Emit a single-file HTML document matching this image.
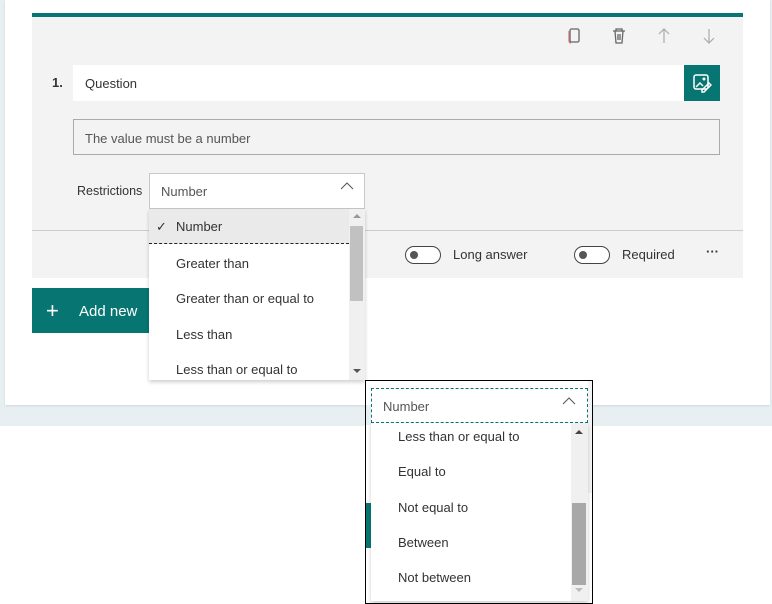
<!DOCTYPE html>
<html><head><style>
*{margin:0;padding:0;box-sizing:border-box}
body{width:772px;height:604px;position:relative;overflow:hidden;background:#fff;font-family:"Liberation Sans",sans-serif;color:#333}
.a{position:absolute}
.t{font-size:13px;color:#333;white-space:nowrap}
</style></head><body>
<div class="a" style="left:0;top:0;width:772px;height:426px;background:#e7eff2"></div>
<div class="a" style="left:5px;top:0;width:765px;height:405px;background:#fff;box-shadow:0 1px 2px rgba(0,0,0,.1)"></div>
<div class="a" style="left:32px;top:13px;width:711px;height:265px;background:#f3f3f3"></div>
<div class="a" style="left:32px;top:13px;width:711px;height:4px;background:#077672"></div>
<div class="a" style="left:32px;top:230px;width:711px;height:1px;background:#ccc"></div>
<!-- toolbar icons -->
<svg class="a" style="left:560px;top:25px" width="170" height="22" viewBox="0 0 170 22">
<rect x="10" y="4" width="9" height="13" rx="1.5" fill="none" stroke="#666" stroke-width="1.3"/>
<path d="M9 6v10a2 2 0 0 0 2 2" stroke="#c77" fill="none" stroke-width="1.2"/>
<path d="M53 6h12M56 6V4h6v2M55 6l1 12h6l1-12M58 9v6M60 9v6" stroke="#666" fill="none" stroke-width="1.3"/>
<path d="M104 18V4M99 9l5-5 5 5" stroke="#aaa" fill="none" stroke-width="1.2"/>
<path d="M149 4v14M144 13l5 5 5-5" stroke="#aaa" fill="none" stroke-width="1.2"/>
</svg>
<div class="a" style="left:52px;top:75px;font-size:13px;font-weight:bold">1.</div>
<div class="a" style="left:73px;top:65px;width:611px;height:36px;background:#fff"></div>
<div class="a t" style="left:85px;top:76px">Question</div>
<div class="a" style="left:684px;top:65px;width:36px;height:36px;background:#077672"></div>
<svg class="a" style="left:692px;top:73px" width="20" height="20" viewBox="0 0 20 20"><rect x="2" y="2" width="14" height="14" rx="2" fill="none" stroke="#fff" stroke-width="1.5"/><circle cx="12" cy="6" r="1.5" fill="#fff"/><path d="M4 14l4-4 3 3M10 17l7-7 2 2-7 7h-2z" stroke="#fff" fill="none" stroke-width="1.5"/></svg>
<div class="a" style="left:73px;top:119px;width:647px;height:36px;border:1px solid #aaa;background:#f3f3f3"></div>
<div class="a t" style="left:85px;top:131px;color:#555">The value must be a number</div>
<div class="a t" style="left:77px;top:184px;font-size:12.5px">Restrictions</div>
<div class="a" style="left:149px;top:173px;width:216px;height:36px;border:1px solid #c8c8c8;background:#fff"></div>
<div class="a t" style="left:161px;top:184px;color:#555">Number</div>
<svg class="a" style="left:340px;top:182px" width="14" height="10"><path d="M1 7l6-6 6 6" stroke="#555" fill="none"/></svg>
<!-- toggles -->
<div class="a" style="left:405px;top:246px;width:36px;height:18px;border:1px solid #444;border-radius:9px;background:#fff"></div>
<div class="a" style="left:410px;top:251px;width:8px;height:8px;border-radius:50%;background:#555"></div>
<div class="a t" style="left:453px;top:247px">Long answer</div>
<div class="a" style="left:574px;top:246px;width:36px;height:18px;border:1px solid #444;border-radius:9px;background:#fff"></div>
<div class="a" style="left:579px;top:251px;width:8px;height:8px;border-radius:50%;background:#555"></div>
<div class="a t" style="left:622px;top:247px">Required</div>
<div class="a t" style="left:706px;top:244px;font-weight:bold">···</div>
<!-- add new -->
<div class="a" style="left:32px;top:288px;width:120px;height:45px;background:#077672"></div>
<div class="a" style="left:46px;top:298px;color:#fff;font-size:22px;font-weight:300">+</div>
<div class="a" style="left:79px;top:303px;color:#fff;font-size:15px">Add new</div>
<!-- dropdown 1 -->
<div class="a" style="left:149px;top:209px;width:216px;height:171px;background:#fff;box-shadow:0 2px 4px rgba(0,0,0,.2);overflow:hidden">
<div class="a" style="left:0;top:0;width:200px;height:35px;background:#eaeaea;border-bottom:1px dashed #222"></div>
<div class="a t" style="left:7px;top:10px">✓</div>
<div class="a t" style="left:27px;top:10px">Number</div>
<div class="a t" style="left:27px;top:47px">Greater than</div>
<div class="a t" style="left:27px;top:82px">Greater than or equal to</div>
<div class="a t" style="left:27px;top:118px">Less than</div>
<div class="a t" style="left:27px;top:153px">Less than or equal to</div>
<div class="a" style="left:200px;top:0;width:16px;height:171px;background:#f0f0f0"></div>
<div class="a" style="left:201px;top:17px;width:13px;height:75px;background:#c1c1c1"></div>
<div class="a" style="left:204px;top:5px;border:4px solid transparent;border-bottom:4px solid #999;border-top:0"></div>
<div class="a" style="left:204px;top:160px;border:4px solid transparent;border-top:4px solid #555;border-bottom:0"></div>
</div>
<!-- popup 2 -->
<div class="a" style="left:365px;top:380px;width:228px;height:224px;border:1px solid #000;background:#fff;overflow:hidden">
<div class="a" style="left:0;top:24px;width:240px;height:20px;background:#e7eff2"></div>
<div class="a" style="left:0;top:0;width:228px;height:112px;background:#f3f3f3;clip-path:inset(0 0 0 222px)"></div>
<div class="a" style="left:0;top:122px;width:5px;height:45px;background:#077672"></div>
<div class="a" style="left:5px;top:7px;width:217px;height:35px;border:1px dashed #077672;background:#fff"></div>
<div class="a t" style="left:17px;top:18px;color:#555">Number</div>
<svg class="a" style="left:196px;top:16px" width="14" height="10"><path d="M1 7l6-6 6 6" stroke="#555" fill="none"/></svg>
<div class="a" style="left:5px;top:42px;width:217px;height:178px;background:#fff;box-shadow:0 2px 4px rgba(0,0,0,.2)">
<div class="a t" style="left:27px;top:6px">Less than or equal to</div>
<div class="a t" style="left:27px;top:41px">Equal to</div>
<div class="a t" style="left:27px;top:77px">Not equal to</div>
<div class="a t" style="left:27px;top:112px">Between</div>
<div class="a t" style="left:27px;top:147px">Not between</div>
<div class="a" style="left:200px;top:0;width:17px;height:178px;background:#f0f0f0"></div>
<div class="a" style="left:201px;top:80px;width:14px;height:82px;background:#a8a8a8"></div>
<div class="a" style="left:204px;top:7px;border:4px solid transparent;border-bottom:4px solid #444;border-top:0"></div>
<div class="a" style="left:204px;top:165px;border:4px solid transparent;border-top:4px solid #bbb;border-bottom:0"></div>
</div>
</div>
</body></html>
